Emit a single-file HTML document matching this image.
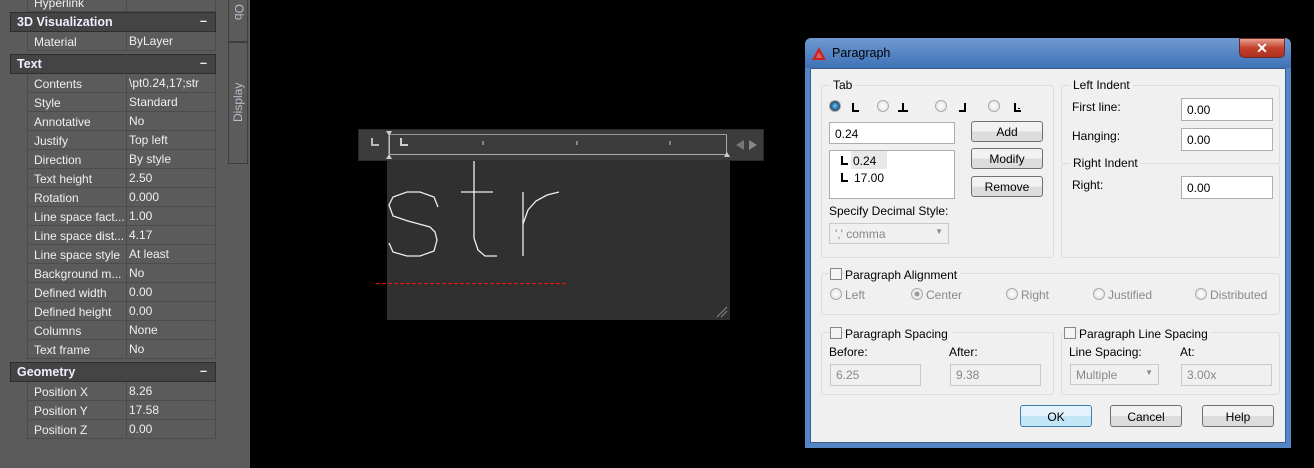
<!DOCTYPE html>
<html><head><meta charset="utf-8"><style>
*{box-sizing:border-box;margin:0;padding:0}
body{width:1314px;height:468px;background:#000;position:relative;overflow:hidden;font-family:"Liberation Sans",sans-serif;font-size:12px}
.a{position:absolute}
#lp{left:0;top:0;width:250px;height:468px;background:#5b5b5b}
.hd{position:absolute;left:10px;width:206px;height:20px;background:#444;border:1px solid #2e2e2e;color:#eef;font-weight:bold;font-size:12.5px;padding:2px 0 0 6px}
.hd span{position:absolute;right:8px;top:1px}
.r{position:absolute;left:27px;width:189px;height:19px;border:1px solid #4c4c4c;border-top:none;color:#f0f0f0;font-size:12px}
.r b{font-weight:normal;position:absolute;left:6px;top:3px}
.r i{font-style:normal;position:absolute;left:101px;top:2px}
.r:before{content:"";position:absolute;left:98px;top:0;bottom:0;border-left:1px solid #4c4c4c}
.dlg{left:805px;top:38px;width:486px;height:410px;background:linear-gradient(#6f9ad0,#3f72b8 30px,#5585c4 30px);border-radius:6px 6px 0 0}
.body{position:absolute;left:5px;top:30px;width:476px;height:375px;background:#f0f0f0;border:1px solid #3b5d8a}
.gb{position:absolute;border:1px solid #d5dfe5;border-radius:3px}
.gt{position:absolute;background:#f0f0f0;padding:0 3px;top:-8px;left:8px;color:#000}
.t{position:absolute;color:#000;font-size:12px}
.in{position:absolute;background:#fff;border:1px solid #abadb3;height:24px;padding:4px 0 0 5px;font-size:12px}
.dis{background:#f0f0f0;border-color:#c9c9c9;color:#888}
.btn{position:absolute;width:72px;height:21px;border:1px solid #707070;border-radius:3px;background:linear-gradient(#f2f2f2 50%,#dcdcdc 50%);text-align:center;padding-top:3px;font-size:12px}
.rad{position:absolute;width:12px;height:12px;border-radius:50%;border:1px solid #aaa;background:radial-gradient(#fff,#ddd)}
.cb{position:absolute;width:12px;height:12px;border:1px solid #888;background:#f4f4f4}
.g{color:#8a8a8a}
</style></head><body>
<div id="lp" class="a">
<div class="r" style="top:-7px"><b>Hyperlink</b></div>
<div class="hd" style="top:12px">3D Visualization<span>–</span></div>
<div class="r" style="top:32px"><b>Material</b><i>ByLayer</i></div>
<div class="hd" style="top:54px">Text<span>–</span></div>
<div class="r" style="top:74px"><b>Contents</b><i>\pt0.24,17;str</i></div>
<div class="r" style="top:93px"><b>Style</b><i>Standard</i></div>
<div class="r" style="top:112px"><b>Annotative</b><i>No</i></div>
<div class="r" style="top:131px"><b>Justify</b><i>Top left</i></div>
<div class="r" style="top:150px"><b>Direction</b><i>By style</i></div>
<div class="r" style="top:169px"><b>Text height</b><i>2.50</i></div>
<div class="r" style="top:188px"><b>Rotation</b><i>0.000</i></div>
<div class="r" style="top:207px"><b>Line space fact...</b><i>1.00</i></div>
<div class="r" style="top:226px"><b>Line space dist...</b><i>4.17</i></div>
<div class="r" style="top:245px"><b>Line space style</b><i>At least</i></div>
<div class="r" style="top:264px"><b>Background m...</b><i>No</i></div>
<div class="r" style="top:283px"><b>Defined width</b><i>0.00</i></div>
<div class="r" style="top:302px"><b>Defined height</b><i>0.00</i></div>
<div class="r" style="top:321px"><b>Columns</b><i>None</i></div>
<div class="r" style="top:340px"><b>Text frame</b><i>No</i></div>
<div class="hd" style="top:362px">Geometry<span>–</span></div>
<div class="r" style="top:382px"><b>Position X</b><i>8.26</i></div>
<div class="r" style="top:401px"><b>Position Y</b><i>17.58</i></div>
<div class="r" style="top:420px"><b>Position Z</b><i>0.00</i></div>
<div class="a" style="left:228px;top:-2px;width:20px;height:44px;border:1px solid #3e3e3e;border-top:none;background:#5b5b5b"></div>
<div class="a" style="top:4px;color:#bbc;transform:rotate(90deg);transform-origin:left top;left:246px;font-size:12px">Ob</div>
<div class="a" style="left:228px;top:42px;width:20px;height:122px;border:1px solid #3e3e3e;background:#5b5b5b"></div>
<div class="a" style="left:231px;top:122px;color:#bbc;transform:rotate(-90deg);transform-origin:left top;font-size:12px">Display</div>
</div>

<div class="a" style="left:358px;top:129px;width:406px;height:32px;background:#3c3c3c;border:1px solid #2a2a2a"></div>
<div class="a" style="left:389px;top:134px;width:338px;height:21px;border:1px solid #aaa;border-bottom:none;border-top:1px solid #999"></div>
<div class="a" style="left:389px;top:154px;width:338px;height:1px;background:#aaa"></div>
<svg class="a" style="left:358px;top:129px" width="406" height="32">
<path d="M14 9v7h7" stroke="#bbb" stroke-width="2" fill="none"/>
<path d="M43 9v7h7" stroke="#ccc" stroke-width="2" fill="none"/>
<path d="M28 2h6l-3 5z M28 30h6l-3-5z" fill="#ccc"/><path d="M31 7v18" stroke="#ccc"/>
<path d="M366 28h6l-3-5z" fill="#ccc"/>
<path d="M125 12v4M219 12v4M312 12v4" stroke="#ccc"/>
<path d="M378 16l8-5v10z" fill="#777"/><path d="M391 11l8 5-8 5z" fill="#888"/>
</svg>
<div class="a" style="left:387px;top:160px;width:343px;height:160px;background:#303030"></div>
<svg class="a" style="left:387px;top:160px" width="343" height="160">
<g stroke="#eee" stroke-width="1.3" fill="none">
<path d="M51 47L47 37L33 32L20 32L6 37L2 45L6 56L21 61L43 67L48 72L50 80L47 91L33 96L20 96L6 92L2 83"/>
<path d="M87 1V78L91 90L98 96H110M74 32H106"/>
<path d="M136 32V96M136 64L141 50L149 41L160 35L172 32"/>
</g>
<path d="M330 157l10-10M334 157l6-6" stroke="#888"/>
</svg>
<svg class="a" style="left:376px;top:282px" width="192" height="3"><path d="M0 1.5H190" stroke="#e11" stroke-width="1" stroke-dasharray="4 2"/></svg>

<div class="a dlg">
<svg class="a" style="left:7px;top:9px" width="14" height="14"><path d="M7 0L0 13h14z" fill="#c22"/><path d="M7 5l-3 6h6z" fill="#fff" opacity=".3"/></svg>
<div class="a" style="left:27px;top:8px;color:#000;font-size:12.5px">Paragraph</div>
<div class="a" style="left:434px;top:0;width:46px;height:20px;border-radius:0 0 5px 5px;background:linear-gradient(#e8a090,#c2402c 50%,#b03020);border:1px solid #6a2a2a;color:#fff;text-align:center;font-weight:bold;font-size:14px;line-height:18px">✕</div>
<div class="body">
<div class="gb" style="left:10px;top:16px;width:233px;height:173px"><div class="gt">Tab</div></div>
<div class="rad" style="left:18px;top:31px;background:radial-gradient(#6cf,#135 80%)"></div>
<svg class="a" style="left:40px;top:33px" width="200" height="12" fill="none" stroke="#000" stroke-width="2">
<path d="M2 1v8h6"/><path d="M52 1v8M47 9h10"/><path d="M108 9h6v-8"/><path d="M164 1v8h6M168 6v1"/></svg>
<div class="rad" style="left:66px;top:31px"></div>
<div class="rad" style="left:124px;top:31px"></div>
<div class="rad" style="left:177px;top:31px"></div>
<div class="in" style="left:18px;top:53px;width:126px;height:22px">0.24</div>
<div class="in" style="left:18px;top:81px;width:126px;height:49px;padding:0"></div>
<div class="a" style="left:40px;top:82px;width:36px;height:18px;background:#e8e8e8"></div>
<svg class="a" style="left:29px;top:86px" width="10" height="30" fill="none" stroke="#000" stroke-width="2"><path d="M2 1v8h6M2 18v8h6"/></svg>
<div class="t" style="left:42px;top:85px">0.24</div>
<div class="t" style="left:43px;top:102px">17.00</div>
<div class="btn" style="left:160px;top:52px">Add</div>
<div class="btn" style="left:160px;top:79px">Modify</div>
<div class="btn" style="left:160px;top:107px">Remove</div>
<div class="t" style="left:18px;top:135px">Specify Decimal Style:</div>
<div class="in dis" style="left:18px;top:154px;width:120px;height:21px;padding-top:3px">',' comma<span style="position:absolute;right:5px;top:3px;font-size:8px">▼</span></div>

<div class="gb" style="left:250px;top:16px;width:219px;height:79px"><div class="gt">Left Indent</div></div>
<div class="t" style="left:261px;top:31px">First line:</div>
<div class="in" style="left:370px;top:29px;width:92px;height:23px">0.00</div>
<div class="t" style="left:261px;top:60px">Hanging:</div>
<div class="in" style="left:370px;top:59px;width:92px;height:23px">0.00</div>
<div class="gb" style="left:250px;top:94px;width:219px;height:95px"><div class="gt">Right Indent</div></div>
<div class="t" style="left:261px;top:109px">Right:</div>
<div class="in" style="left:370px;top:107px;width:92px;height:23px">0.00</div>

<div class="gb" style="left:10px;top:204px;width:459px;height:42px"></div>
<div class="cb" style="left:19px;top:199px"></div>
<div class="t" style="left:34px;top:199px;background:#f0f0f0;padding-right:4px">Paragraph Alignment</div>
<div class="rad" style="left:19px;top:219px"></div><div class="t g" style="left:34px;top:219px">Left</div>
<div class="rad" style="left:100px;top:219px;background:radial-gradient(#999 30%,#eee 40%)"></div><div class="t g" style="left:115px;top:219px">Center</div>
<div class="rad" style="left:195px;top:219px"></div><div class="t g" style="left:210px;top:219px">Right</div>
<div class="rad" style="left:282px;top:219px"></div><div class="t g" style="left:297px;top:219px">Justified</div>
<div class="rad" style="left:384px;top:219px"></div><div class="t g" style="left:399px;top:219px">Distributed</div>

<div class="gb" style="left:10px;top:263px;width:233px;height:63px"></div>
<div class="cb" style="left:19px;top:258px"></div>
<div class="t" style="left:34px;top:258px;background:#f0f0f0;padding-right:4px">Paragraph Spacing</div>
<div class="t" style="left:18px;top:276px">Before:</div><div class="t" style="left:138px;top:276px">After:</div>
<div class="in dis" style="left:19px;top:295px;width:91px;height:22px;padding-top:3px">6.25</div>
<div class="in dis" style="left:139px;top:295px;width:91px;height:22px;padding-top:3px">9.38</div>
<div class="gb" style="left:250px;top:263px;width:219px;height:63px"></div>
<div class="cb" style="left:253px;top:258px"></div>
<div class="t" style="left:268px;top:258px;background:#f0f0f0;padding-right:4px">Paragraph Line Spacing</div>
<div class="t" style="left:258px;top:276px">Line Spacing:</div><div class="t" style="left:369px;top:276px">At:</div>
<div class="in dis" style="left:259px;top:295px;width:89px;height:21px;padding-top:3px">Multiple<span style="position:absolute;right:5px;top:3px;font-size:8px">▼</span></div>
<div class="in dis" style="left:370px;top:295px;width:91px;height:22px;padding-top:3px">3.00x</div>

<div class="btn" style="left:209px;top:336px;border-color:#3c7fb1;background:linear-gradient(#e5f4fc 50%,#c4e5f6 50%);height:22px;padding-top:4px">OK</div>
<div class="btn" style="left:299px;top:336px;height:22px;padding-top:4px">Cancel</div>
<div class="btn" style="left:391px;top:336px;height:22px;padding-top:4px">Help</div>
</div></div>
</body></html>
